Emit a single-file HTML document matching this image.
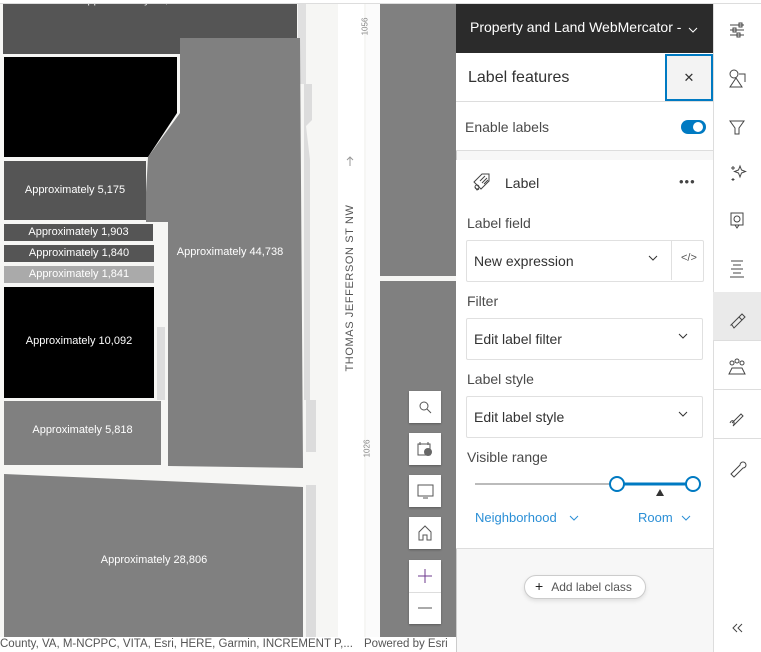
<!DOCTYPE html>
<html><head><style>
*{margin:0;padding:0;box-sizing:border-box}
body{width:761px;height:652px;overflow:hidden;position:relative;background:#fff;font-family:"Liberation Sans",sans-serif}
.a{position:absolute}
.lbl{position:absolute;color:#fff;font-size:11px;text-align:center;white-space:nowrap}
.p{font-size:14px;color:#323232}
.sel{position:absolute;left:466px;width:237px;height:42px;border:1px solid #e0e0e0;border-radius:2px;font-size:14px;color:#323232;padding:12px 7px}
.chev{position:absolute;top:14px}
.btn{position:absolute;left:409px;width:32px;height:32px;background:#fff;box-shadow:0 1px 2px rgba(0,0,0,.3)}
.ai{position:absolute;left:713px;width:48px;height:48px}
</style></head><body>
<div class="a" style="left:0;top:4px;width:456px;height:633px;background:#f6f6f4"></div>
<svg class="a" style="left:0;top:0" width="456" height="652">
<rect x="298" y="4" width="8" height="80" fill="#e0e0e0"/>
<polygon points="304,84 312,84 312,120 306,126 310,160 310,400 304,400" fill="#dcdcdc"/>
<rect x="306" y="400" width="10" height="52" fill="#dcdcdc"/>
<rect x="306" y="485" width="10" height="152" fill="#dcdcdc"/>
<rect x="338" y="4" width="26" height="633" fill="#fff"/>
<rect x="366" y="4" width="14" height="633" fill="#fbfbfb"/>
<rect x="3" y="4" width="294" height="50" fill="#555"/>
<polygon points="4,57 177,57 177,113 148,157 4,157" fill="#000"/>
<polygon points="180,38 300,38 303,468 168,466 168,222 146,222 146,192 148,157 180,113" fill="#808080"/>
<rect x="4" y="161" width="142" height="59" fill="#555"/>
<rect x="4" y="224" width="149" height="17" fill="#555"/>
<rect x="4" y="245" width="150" height="17" fill="#555"/>
<rect x="4" y="266" width="150" height="17" fill="#aaa"/>
<rect x="4" y="287" width="150" height="111" fill="#000"/>
<rect x="157" y="327" width="8" height="73" fill="#ddd"/>
<rect x="4" y="401" width="157" height="64" fill="#808080"/>
<polygon points="4,474 303,487 303,637 4,637" fill="#808080"/>
<rect x="380" y="4" width="76" height="272" fill="#808080"/>
<rect x="380" y="281" width="76" height="356" fill="#808080"/>
<path d="M350 166v-9M347 160l3-3 3 3" stroke="#999" fill="none"/>
</svg>
<div class="lbl" style="left:80px;top:-6px;color:#eee">Approximately 15,244</div>
<div class="lbl" style="left:4px;top:184px;width:142px">Approximately 5,175</div>
<div class="lbl" style="left:4px;top:226px;width:149px">Approximately 1,903</div>
<div class="lbl" style="left:4px;top:247px;width:150px">Approximately 1,840</div>
<div class="lbl" style="left:4px;top:268px;width:150px">Approximately 1,841</div>
<div class="lbl" style="left:170px;top:246px;width:120px">Approximately 44,738</div>
<div class="lbl" style="left:4px;top:335px;width:150px">Approximately 10,092</div>
<div class="lbl" style="left:4px;top:424px;width:157px">Approximately 5,818</div>
<div class="lbl" style="left:4px;top:554px;width:300px">Approximately 28,806</div>
<div class="a" style="left:255px;top:282px;width:190px;text-align:center;transform:rotate(-90deg);font-size:11px;color:#555;white-space:nowrap;letter-spacing:.6px">THOMAS JEFFERSON ST NW</div>
<div class="a" style="left:356px;top:22px;transform:rotate(-90deg);font-size:8px;color:#888">1056</div>
<div class="a" style="left:358px;top:444px;transform:rotate(-90deg);font-size:8px;color:#888">1026</div>
<div class="a" style="left:0;top:637px;width:456px;height:15px;background:rgba(255,255,255,.85);font-size:11.5px;color:#555;line-height:15px;white-space:nowrap;overflow:hidden"><span style="position:absolute;left:0;width:352px;overflow:hidden">County, VA, M-NCPPC, VITA, Esri, HERE, Garmin, INCREMENT P,...</span><span style="position:absolute;left:364px">Powered by Esri</span></div>
<div class="btn" style="top:391px"><svg width="32" height="32"><circle cx="15" cy="15" r="4" fill="none" stroke="#555"/><path d="M18 18l4 4" stroke="#555"/></svg></div>
<div class="btn" style="top:433px"><svg width="32" height="32"><rect x="9" y="11" width="12" height="11" fill="none" stroke="#555"/><path d="M11 9v3M19 9v3" stroke="#555"/><circle cx="19" cy="19" r="4" fill="#666"/></svg></div>
<div class="btn" style="top:475px"><svg width="32" height="32"><rect x="9" y="10" width="15" height="11" fill="none" stroke="#555"/><path d="M14 23h5" stroke="#555"/></svg></div>
<div class="btn" style="top:517px"><svg width="32" height="32"><path d="M10 23V15l6-6 6 6v8h-4v-5h-4v5z" fill="none" stroke="#555"/></svg></div>
<div class="btn" style="top:560px;height:64px"><svg width="32" height="64"><path d="M9 16h14M16 9v14" stroke="#6e3a8e"/><path d="M0 32.5h32" stroke="#ddd"/><path d="M9 48h14" stroke="#555"/></svg></div>

<div class="a" style="left:0;top:0;width:761px;height:4px;border-bottom:1px solid #ddd;background:#fff"></div>
<div class="a" style="left:456px;top:4px;width:257px;height:648px;background:#f7f7f7;border-left:1px solid #ccc"></div>
<div class="a" style="left:456px;top:4px;width:257px;height:49px;background:#2b2b2b;color:#fff;font-size:14px;padding:15px 14px">Property and Land WebMercator -<svg style="position:absolute;left:232px;top:23px" width="10" height="6"><path d="M1 1l4 4 4-4" stroke="#fff" fill="none"/></svg></div>
<div class="a" style="left:456px;top:53px;width:257px;height:49px;background:#fff;border-bottom:1px solid #ddd"></div>
<div class="a" style="left:468px;top:69px;font-size:16px;color:#323232">Label features</div>
<div class="a" style="left:665px;top:54px;width:48px;height:47px;background:#f3f3f3;border:2px solid #007ac2;text-align:center;line-height:43px;font-size:13px;color:#323232">✕</div>
<div class="a" style="left:456px;top:102px;width:257px;height:49px;background:#fff;border-bottom:1px solid #ddd"></div>
<div class="a p" style="left:465px;top:119px;color:#4a4a4a">Enable labels</div>
<div class="a" style="left:681px;top:120px;width:25px;height:14px;border-radius:7px;background:#007ac2"><div class="a" style="left:12px;top:2px;width:10px;height:10px;border-radius:50%;background:#fff"></div></div>
<div class="a" style="left:456px;top:160px;width:257px;height:389px;background:#fff;border-bottom:1px solid #ddd"></div>
<svg class="a" style="left:470px;top:170px" width="24" height="24"><path d="M4 12l8-8h7v7l-8 8z M5 17l2 3 2-1" fill="none" stroke="#444"/><circle cx="7" cy="17" r="2" fill="none" stroke="#444"/><path d="M10 11l5-5M12 13l5-5M14 14l4-4" stroke="#444"/></svg>
<div class="a p" style="left:505px;top:175px">Label</div>
<div class="a" style="left:679px;top:174px;font-size:13px;color:#444;letter-spacing:1px">•••</div>
<div class="a p" style="left:467px;top:215px;color:#4a4a4a">Label field</div>
<div class="sel" style="top:240px;width:238px">New expression<svg class="chev" style="left:181px" width="10" height="6"><path d="M1 1l4 4 4-4" stroke="#333" fill="none"/></svg><span style="position:absolute;left:204px;top:-1px;height:40px;border-left:1px solid #e0e0e0;padding:12px 9px;font-size:11px;color:#555">&lt;/&gt;</span></div>
<div class="a p" style="left:467px;top:293px;color:#4a4a4a">Filter</div>
<div class="sel" style="top:318px">Edit label filter<svg class="chev" style="left:211px" width="10" height="6"><path d="M1 1l4 4 4-4" stroke="#333" fill="none"/></svg></div>
<div class="a p" style="left:467px;top:371px;color:#4a4a4a">Label style</div>
<div class="sel" style="top:396px">Edit label style<svg class="chev" style="left:211px" width="10" height="6"><path d="M1 1l4 4 4-4" stroke="#333" fill="none"/></svg></div>
<div class="a p" style="left:467px;top:449px;color:#4a4a4a">Visible range</div>
<svg class="a" style="left:470px;top:473px" width="235" height="24"><path d="M5 11h141" stroke="#bbb" stroke-width="2"/><path d="M147 11h76" stroke="#007ac2" stroke-width="3"/><circle cx="147" cy="11" r="7" fill="#fff" stroke="#007ac2" stroke-width="2"/><circle cx="223" cy="11" r="7" fill="#fff" stroke="#007ac2" stroke-width="2"/><path d="M186 23l4-7 4 7z" fill="#333"/></svg>
<div class="a" style="left:475px;top:510px;font-size:13px;color:#2b8fd6">Neighborhood</div>
<svg class="a" style="left:569px;top:515px" width="10" height="6"><path d="M1 1l4 4 4-4" stroke="#2b8fd6" fill="none"/></svg>
<div class="a" style="left:638px;top:510px;font-size:13px;color:#2b8fd6">Room</div>
<svg class="a" style="left:681px;top:515px" width="10" height="6"><path d="M1 1l4 4 4-4" stroke="#2b8fd6" fill="none"/></svg>
<div class="a" style="left:524px;top:575px;width:122px;height:24px;border:1px solid #ccc;border-radius:12px;background:#fff;font-size:12px;color:#555;padding:4px 10px;box-shadow:0 2px 4px rgba(0,0,0,.1)"><span style="color:#222;font-size:14px;margin-right:8px;line-height:12px">+</span>Add label class</div>

<div class="a" style="left:713px;top:4px;width:48px;height:648px;background:#fff;border-left:1px solid #ddd"></div>
<div class="ai" style="top:292px;background:#eaeaea"></div>
<div class="a" style="left:713px;top:389px;width:48px;border-top:1px solid #ddd"></div>
<div class="a" style="left:713px;top:438px;width:48px;border-top:1px solid #ddd"></div>
<div class="a" style="left:713px;top:340px;width:48px;border-top:1px solid #ddd"></div>
<svg class="a" style="left:713px;top:4px" width="48" height="648" fill="none" stroke="#444">
<path d="M17 21h14M17 26h14M17 31h14"/><rect x="26" y="19" width="3" height="4"/><rect x="20" y="24" width="3" height="4"/><rect x="24" y="29" width="3" height="4"/>
<circle cx="21" cy="70" r="4"/><path d="M17 83l6-9 6 9z M26 70h6v8"/>
<path d="M17 117h14l-5 7v6h-4v-6z"/>
<path d="M27 162l1.5 4 4 1.5-4 1.5-1.5 4-1.5-4-4-1.5 4-1.5z M20 162v4M18 164h4 M20 174v3M18.5 175.5h3"/>
<rect x="18" y="209" width="12" height="12"/><circle cx="24" cy="215" r="3"/><path d="M22 221l2 3 2-3"/>
<path d="M18 257h12M20 261h8M18 265h12M20 269h8M17 273h14"/>
<path d="M19 321l2 3 8-8-3-3-8 8z M26 313l3-3 3 3-3 3"/>
<circle cx="19" cy="359" r="2"/><circle cx="24" cy="357" r="2"/><circle cx="29" cy="359" r="2"/><path d="M16 370h16l-3-6H19z"/>
<path d="M17 419c2-5 6-1 3 3l10-10-2-2-9 9"/>
<path d="M18 470l9-9a3 3 0 1 1 3 3l-9 9z"/>
<path d="M24 620l-4 4 4 4M29 620l-4 4 4 4"/>
</svg>
</body></html>
